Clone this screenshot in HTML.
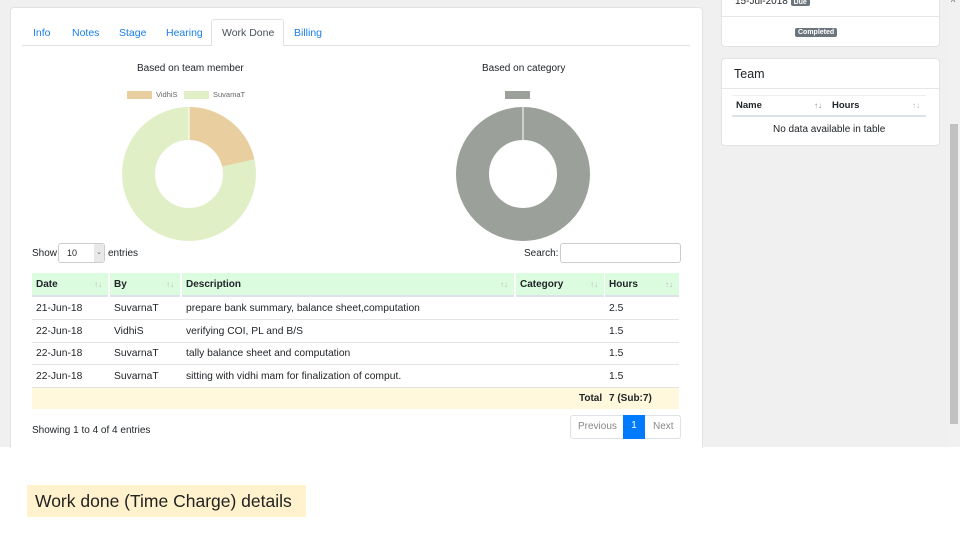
<!DOCTYPE html>
<html><head><style>
*{box-sizing:border-box;margin:0;padding:0}
body{width:960px;height:540px;background:#fff;font-family:"Liberation Sans",sans-serif;color:#212529;position:relative;overflow:hidden;font-size:10px}
.a{position:absolute}
.gray{left:0;top:0;width:948px;height:447px;background:#f0f0f0}
.card{background:#fff;border:1px solid #e3e3e3;border-radius:4px}
.tab{position:absolute;top:27px;font-size:10.5px;color:#1a7fe8}
.th{position:absolute;top:272px;height:24px;background:#dcfce0;font-weight:bold;font-size:10px;line-height:24px;padding-left:4px;border-bottom:2px solid #dde2ea}
.th i{position:absolute;right:6px;font-style:normal;color:#bbb;font-weight:normal;font-size:8px}
.row{position:absolute;left:32px;width:647px;height:23px;border-bottom:1px solid #e4e4e4;font-size:10.3px;line-height:23px}
.row span{position:absolute}
</style></head><body>
<div class="a gray"></div>
<div class="a" style="left:948px;top:0;width:12px;height:447px;background:#f1f1f1"></div>
<div class="a" style="left:950px;top:124px;width:8px;height:300px;background:#c1c1c1"></div>
<div class="a" style="left:951px;top:-3px;font-size:9px;color:#555">^</div>
<div class="a card" style="left:10px;top:7px;width:693px;height:441px;border-bottom:none;border-radius:4px 4px 0 0"></div>
<div class="a" style="left:22px;top:45px;width:668px;height:1px;background:#dee2e6"></div>
<div class="a" style="left:211px;top:19px;width:73px;height:27px;background:#fff;border:1px solid #dee2e6;border-bottom:none;border-radius:3px 3px 0 0"></div>
<div class="tab" style="left:33px">Info</div>
<div class="tab" style="left:72px">Notes</div>
<div class="tab" style="left:119px">Stage</div>
<div class="tab" style="left:166px">Hearing</div>
<div class="tab" style="left:222px;color:#495057">Work Done</div>
<div class="tab" style="left:294px">Billing</div>
<div class="a" style="left:137px;top:63px;font-size:10px">Based on team member</div>
<div class="a" style="left:482px;top:63px;font-size:10px">Based on category</div>
<div class="a" style="left:127px;top:91px;width:25px;height:8px;background:#e9cfa0"></div>
<div class="a" style="left:156px;top:90px;font-size:7.5px;color:#666">VidhiS</div>
<div class="a" style="left:184px;top:91px;width:25px;height:8px;background:#e0efc6"></div>
<div class="a" style="left:213px;top:90px;font-size:7.5px;color:#666">SuvamaT</div>
<div class="a" style="left:505px;top:91px;width:25px;height:8px;background:#9ba09a"></div>
<svg class="a" style="left:0;top:0" width="700" height="250">
<g transform="rotate(-90 189 174)">
<circle cx="189" cy="174" r="50.5" fill="none" stroke="#e0efc6" stroke-width="33"/>
<circle cx="189" cy="174" r="50.5" fill="none" stroke="#e9cfa0" stroke-width="33" stroke-dasharray="68 400"/>
</g>
<line x1="189" y1="107" x2="189" y2="141" stroke="#fff" stroke-width="1"/>
<circle cx="523" cy="174" r="50.5" fill="none" stroke="#9ba09a" stroke-width="33"/>
<line x1="523" y1="107" x2="523" y2="141" stroke="#fff" stroke-width="1"/>
</svg>
<div class="a" style="left:32px;top:248px;font-size:10px">Show</div>
<div class="a" style="left:58px;top:243px;width:47px;height:20px;border:1px solid #ccc;border-radius:3px;font-size:9px;line-height:18px;padding-left:8px">10</div>
<div class="a" style="left:94px;top:244px;width:10px;height:18px;background:#e8e8e8;font-size:7px;line-height:18px;text-align:center;color:#666">⌄</div>
<div class="a" style="left:108px;top:248px;font-size:10px">entries</div>
<div class="a" style="left:524px;top:248px;font-size:10px">Search:</div>
<div class="a" style="left:560px;top:243px;width:121px;height:20px;border:1px solid #ccc;border-radius:3px"></div>
<div class="th" style="left:32px;width:76px;top:273px">Date<i>↑↓</i></div>
<div class="th" style="left:110px;width:70px;top:273px">By<i>↑↓</i></div>
<div class="th" style="left:182px;width:332px;top:273px">Description<i>↑↓</i></div>
<div class="th" style="left:516px;width:88px;top:273px">Category<i>↑↓</i></div>
<div class="th" style="left:605px;width:74px;top:273px">Hours<i>↑↓</i></div>
<div class="row" style="top:297px"><span style="left:4px">21-Jun-18</span><span style="left:82px">SuvarnaT</span><span style="left:154px">prepare bank summary, balance sheet,computation</span><span style="left:577px">2.5</span></div>
<div class="row" style="top:320px"><span style="left:4px">22-Jun-18</span><span style="left:82px">VidhiS</span><span style="left:154px">verifying COI, PL and B/S</span><span style="left:577px">1.5</span></div>
<div class="row" style="top:342px"><span style="left:4px">22-Jun-18</span><span style="left:82px">SuvarnaT</span><span style="left:154px">tally balance sheet and computation</span><span style="left:577px">1.5</span></div>
<div class="row" style="top:365px"><span style="left:4px">22-Jun-18</span><span style="left:82px">SuvarnaT</span><span style="left:154px">sitting with vidhi mam for finalization of comput.</span><span style="left:577px">1.5</span></div>
<div class="a" style="left:32px;top:388px;width:647px;height:21px;background:#fff8dc;font-weight:bold;font-size:10px;line-height:21px"><span class="a" style="left:547px">Total</span><span class="a" style="left:577px">7 (Sub:7)</span></div>
<div class="a" style="left:32px;top:425px;font-size:10px">Showing 1 to 4 of 4 entries</div>
<div class="a" style="left:570px;top:415px;width:111px;height:24px;border:1px solid #dee2e6;border-radius:3px;font-size:10px;line-height:22px;color:#888"><span class="a" style="left:7px">Previous</span><span class="a" style="left:52px;top:-1px;width:22px;height:24px;background:#007bff;color:#fff;text-align:center">1</span><span class="a" style="left:82px">Next</span></div>
<div class="a card" style="left:721px;top:-5px;width:219px;height:52px"></div>
<div class="a" style="left:722px;top:16px;width:217px;height:1px;background:#e6e6e6"></div>
<div class="a" style="left:735px;top:-4px;font-size:10px">15-Jul-2018 <span style="background:#6c757d;color:#fff;font-size:7px;font-weight:bold;padding:0 3px;border-radius:2px">Due</span></div>
<div class="a" style="left:795px;top:28px;background:#6c757d;color:#fff;font-size:7px;font-weight:bold;padding:1px 3px;border-radius:2px">Completed</div>
<div class="a card" style="left:721px;top:58px;width:219px;height:88px"></div>
<div class="a" style="left:722px;top:88px;width:217px;height:1px;background:#e6e6e6"></div>
<div class="a" style="left:734px;top:67px;font-size:12.5px">Team</div>
<div class="a" style="left:732px;top:95px;width:194px;height:22px;border-top:1px solid #eee;border-bottom:2px solid #dde2ea;font-size:9.5px;font-weight:bold;line-height:20px"><span class="a" style="left:4px">Name</span><span class="a" style="left:82px;font-weight:normal;font-size:8px;color:#888">↑↓</span><span class="a" style="left:100px">Hours</span><span class="a" style="left:180px;font-weight:normal;font-size:8px;color:#bbb">↑↓</span></div>
<div class="a" style="left:773px;top:124px;font-size:10px">No data available in table</div>
<div class="a" style="left:27px;top:485px;width:279px;height:32px;background:#fff2cc;font-size:17.5px;line-height:32px;padding-left:8px;color:#222">Work done (Time Charge) details</div>
</body></html>
